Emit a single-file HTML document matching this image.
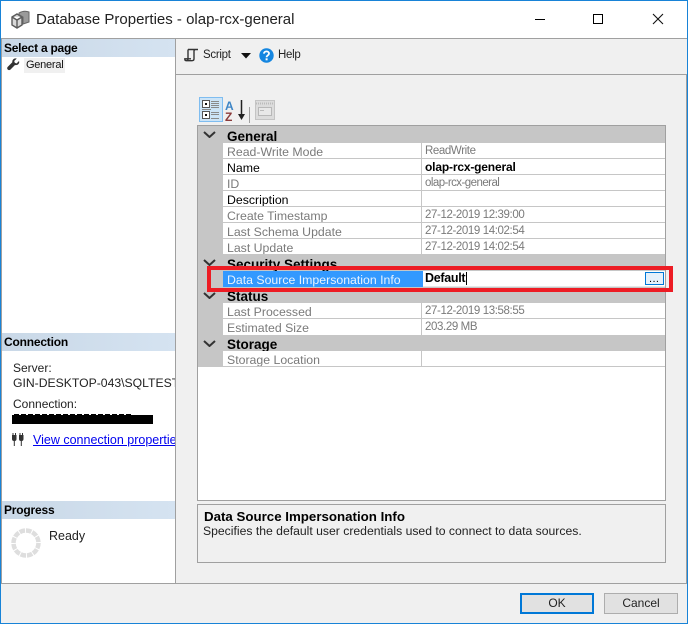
<!DOCTYPE html>
<html><head><meta charset="utf-8"><style>
html,body{margin:0;padding:0;width:688px;height:624px;overflow:hidden;background:#f0f0f0}
*{box-sizing:border-box}
body{position:relative;font-family:"Liberation Sans",sans-serif;color:#000}
.a{position:absolute}
.t{position:absolute;white-space:nowrap;line-height:15px}
.r{position:absolute;left:223px;width:442px;height:15px;background:#fff;overflow:hidden}
.l{position:absolute;left:4px;top:2px;font-size:12.3px;line-height:15px;white-space:nowrap;color:#7a7a7a}
.v{position:absolute;left:202px;top:1px;font-size:11.5px;letter-spacing:-.39px;line-height:15px;white-space:nowrap;color:#7a7a7a}
.s{position:absolute;left:198px;width:25px;height:16px;background:#c6c6c6}
.sep{position:absolute;left:198px;width:467px;height:1px;background:#c6c6c6}
.d{position:absolute;left:421px;width:1px;background:#c6c6c6}
.h{position:absolute;left:198px;width:467px;background:#c6c6c6;overflow:hidden}
.h b{position:absolute;left:29px;font-size:13.5px;line-height:15px;white-space:nowrap}
.h svg{position:absolute;left:5px}
.k{color:#000}
</style></head><body>
<!-- title bar -->
<div class="a" style="left:0;top:0;width:688px;height:38px;background:#fff"></div>
<svg class="a" style="left:10px;top:9px" width="20" height="20" viewBox="0 0 20 20"><path d="M2 8 L7 5 L12 8 L12 16 L7 19 L2 16 Z M2 8 L7 11 L12 8 M7 11 V19" fill="#d8d8d8" stroke="#5a5a5a" stroke-width="1.4"/><path d="M9 4 Q14 1 19 3 V13 L13 15 V8 L9 5.5 Z" fill="#9a9a9a" stroke="#666" stroke-width="1"/></svg>
<div class="t" style="left:36px;top:12px;font-size:15px;line-height:16px;color:#222">Database Properties - olap-rcx-general</div>
<div class="a" style="left:535px;top:19px;width:10px;height:1px;background:#000"></div>
<div class="a" style="left:593px;top:14px;width:10px;height:10px;border:1px solid #000"></div>
<svg class="a" style="left:652px;top:13px" width="12" height="12" viewBox="0 0 12 12"><path d="M1 1 L11 11 M11 1 L1 11" stroke="#111" stroke-width="1.1" fill="none"/></svg>
<div class="a" style="left:0;top:38px;width:688px;height:1px;background:#a0a0a0"></div>

<!-- left panel -->
<div class="a" style="left:1px;top:39px;width:174px;height:544px;background:#fff"></div>
<div class="a" style="left:175px;top:39px;width:1px;height:544px;background:#a0a0a0"></div>
<div class="a" style="left:1px;top:39px;width:1px;height:544px;background:#a0a0a0"></div>
<div class="a" style="left:2px;top:39px;width:173px;height:18px;background:linear-gradient(90deg,#c9d8e7,#d5e3f1)"></div>
<div class="t" style="left:4px;top:41px;font-size:12px;font-weight:bold;letter-spacing:-.25px">Select a page</div>
<div class="a" style="left:24px;top:58px;width:41px;height:15px;background:#f0f0f0"></div>
<svg class="a" style="left:7px;top:58px" width="13" height="13" viewBox="0 0 13 13"><path d="M12 3 L9.5 5.5 L7.8 4.8 L7.2 3 L9.7 .6 C7.5 -.2 5 1.5 5.3 4.3 L.6 9 C-.2 10 .2 11 .8 11.6 C1.5 12.3 2.6 12.4 3.4 11.6 L8 7 C10.7 7.6 12.9 5.5 12 3 Z" fill="#333"/></svg>
<div class="t" style="left:26px;top:58px;font-size:11px;letter-spacing:-.25px;color:#111">General</div>

<div class="a" style="left:2px;top:333px;width:173px;height:18px;background:linear-gradient(90deg,#c9d8e7,#d5e3f1)"></div>
<div class="t" style="left:4px;top:335px;font-size:12px;font-weight:bold;letter-spacing:-.2px">Connection</div>
<div class="t" style="left:13px;top:361px;font-size:12px;color:#222">Server:</div>
<div class="a" style="left:13px;top:376px;width:162px;height:16px;overflow:hidden"><div class="t" style="left:0;top:0;font-size:12.2px;color:#222">GIN-DESKTOP-043\SQLTEST</div></div>
<div class="t" style="left:13px;top:397px;font-size:12px;color:#222">Connection:</div>
<div class="a" style="left:14px;top:414px;width:118px;height:1px;background:repeating-linear-gradient(90deg,#000 0 5px,#fff 5px 7px)"></div>
<div class="a" style="left:12px;top:415px;width:141px;height:9px;background:#000"></div>
<svg class="a" style="left:11px;top:433px" width="14" height="14" viewBox="0 0 14 14"><path d="M1 2 H5.5 V6 C5.5 7.5 4.5 8 3.8 8 V13 H2.8 V8 C2 8 1 7.5 1 6 Z M8 2 H12.5 V6 C12.5 7.5 11.5 8 10.8 8 V13 H9.8 V8 C9 8 8 7.5 8 6 Z" fill="#333"/><path d="M2 0 V2 M4.5 0 V2 M9 0 V2 M11.5 0 V2" stroke="#333"/></svg>
<div class="a" style="left:33px;top:433px;width:142px;height:16px;overflow:hidden"><div class="t" style="left:0;top:0;font-size:12.5px;color:#0000ee;text-decoration:underline">View connection properties</div></div>

<div class="a" style="left:2px;top:501px;width:173px;height:18px;background:linear-gradient(90deg,#c9d8e7,#d5e3f1)"></div>
<div class="t" style="left:4px;top:503px;font-size:12px;font-weight:bold;letter-spacing:-.2px">Progress</div>
<svg class="a" style="left:11px;top:528px" width="30" height="30" viewBox="0 0 30 30"><circle cx="15" cy="15" r="12.5" fill="none" stroke="#dedede" stroke-width="4.5" stroke-dasharray="5.5 1"/></svg>
<div class="t" style="left:49px;top:529px;font-size:12.5px;color:#222">Ready</div>

<!-- toolbar -->
<svg class="a" style="left:184px;top:48px" width="15" height="14" viewBox="0 0 15 14"><path d="M4 1.5 H14 M4 1.5 V11 C4 12.3 3 12.7 2 12.7 H8 C9.2 12.7 10 12 10 10.8 V3 C10 2 10.5 1.5 11.5 1.5 M2 12.7 C1 12.7 .8 11.7 .8 10.8 H7" fill="none" stroke="#333" stroke-width="1.4"/></svg>
<div class="t" style="left:203px;top:48px;font-size:11.5px;letter-spacing:-.3px;color:#222">Script</div>
<svg class="a" style="left:241px;top:53px" width="10" height="6" viewBox="0 0 10 6"><path d="M0 0 H10 L5 5.5 Z" fill="#111"/></svg>
<svg class="a" style="left:259px;top:48px" width="15" height="15" viewBox="0 0 15 15"><circle cx="7.5" cy="7.5" r="7.2" fill="#1586e0"/><path d="M5 5.6 C5 2.6 10 2.6 10 5.6 C10 7.3 7.6 7.3 7.6 9.2" fill="none" stroke="#fff" stroke-width="1.8"/><rect x="6.6" y="10.3" width="2" height="2" fill="#fff"/></svg>
<div class="t" style="left:278px;top:48px;font-size:11.5px;letter-spacing:-.3px;color:#222">Help</div>
<div class="a" style="left:176px;top:74px;width:511px;height:1px;background:#a0a0a0"></div>
<div class="a" style="left:686px;top:74px;width:1px;height:510px;background:#a0a0a0"></div>

<!-- grid toolbar -->
<div class="a" style="left:199px;top:97px;width:24px;height:25px;background:#cce4f7;border:1px solid #7fbdf0"></div>
<svg class="a" style="left:201px;top:99px" width="21" height="22" viewBox="0 0 21 22"><rect x="1.500" y="1.500" width="7" height="7" fill="#fff" stroke="#555"/><rect x="4" y="4" width="2" height="2" fill="#111"/><rect x="1.500" y="12.500" width="7" height="7" fill="#fff" stroke="#555"/><rect x="4" y="15" width="2" height="2" fill="#111"/><path d="M10 2.500H18M10 4.500H18M10 6.500H18M10 8.500H18M10 13.500H18M10 15.500H18M1 10.500H10M10 19.500H18" stroke="#8a8a8a"/></svg>
<div class="t" style="left:225px;top:101px;font-size:12px;font-weight:bold;line-height:11px;color:#3d85c6">A</div>
<div class="t" style="left:225px;top:112px;font-size:12px;font-weight:bold;line-height:11px;color:#8a3a3a">Z</div>
<svg class="a" style="left:237px;top:100px" width="9" height="21" viewBox="0 0 9 21"><path d="M4.500 0 V14" stroke="#222" stroke-width="1.500"/><path d="M1 14 H8 L4.500 20 Z" fill="#222"/></svg>
<div class="a" style="left:249px;top:107px;width:1px;height:16px;background:#a0a0a0"></div>
<svg class="a" style="left:255px;top:100px" width="20" height="20" viewBox="0 0 20 20"><rect x=".5" y=".5" width="19" height="19" fill="#dcdcdc" stroke="#c4c4c4"/><path d="M1 3.500H19" stroke="#bbb" stroke-width="2" stroke-dasharray="1 1"/><rect x="3.500" y="7.500" width="13" height="8" fill="#e8e8e8" stroke="#b8b8b8"/><path d="M5 10.500H9" stroke="#bbb"/></svg>

<!-- grid -->
<div class="a" style="left:197px;top:125px;width:469px;height:376px;background:#fff;border:1px solid #a0a0a0"></div>

<div class="h" style="top:126px;height:17px"><svg style="top:5px" width="13" height="7" viewBox="0 0 13 7"><path d="M1 1 L6.500 6 L12 1" fill="none" stroke="#333" stroke-width="2"/></svg><b style="top:3px">General</b></div>
<div class="s" style="top:143px;height:111px"></div>
<div class="r" style="top:143px"><div class="l">Read-Write Mode</div><div class="v">ReadWrite</div></div>
<div class="r" style="top:159px"><div class="l k">Name</div><div class="v k" style="font-size:12px;font-weight:bold;letter-spacing:-.17px">olap-rcx-general</div></div>
<div class="r" style="top:175px"><div class="l">ID</div><div class="v" style="letter-spacing:-.55px">olap-rcx-general</div></div>
<div class="r" style="top:191px"><div class="l k">Description</div></div>
<div class="r" style="top:207px"><div class="l">Create Timestamp</div><div class="v">27-12-2019 12:39:00</div></div>
<div class="r" style="top:223px"><div class="l">Last Schema Update</div><div class="v">27-12-2019 14:02:54</div></div>
<div class="r" style="top:239px"><div class="l">Last Update</div><div class="v">27-12-2019 14:02:54</div></div>

<div class="h" style="top:254px;height:17px"><svg style="top:5px" width="13" height="7" viewBox="0 0 13 7"><path d="M1 1 L6.500 6 L12 1" fill="none" stroke="#333" stroke-width="2"/></svg><b style="top:3px">Security Settings</b></div>
<div class="s" style="top:271px;height:16px"></div>
<div class="a" style="left:223px;top:271px;width:198px;height:16px;background:#3399ff;overflow:hidden"><div class="l" style="color:#e8f3ff;top:2px">Data Source Impersonation Info</div></div>
<div class="a" style="left:421px;top:271px;width:2px;height:16px;background:#3399ff"></div>
<div class="a" style="left:423px;top:271px;width:242px;height:15px;background:#fff"></div>
<div class="a" style="left:423px;top:286px;width:242px;height:1px;background:#e6e6e6"></div>
<div class="t" style="left:425px;top:271px;font-size:12.5px;font-weight:bold;letter-spacing:-.3px">Default</div>
<div class="a" style="left:466px;top:272px;width:1px;height:13px;background:#000"></div>
<div class="a" style="left:645px;top:272px;width:19px;height:13px;background:#e5f1fb;border:1px solid #0078d7"></div>
<div class="t" style="left:649px;top:273px;font-size:11px;line-height:12px;letter-spacing:.4px">...</div>

<div class="h" style="top:287px;height:16px"><svg style="top:5px" width="13" height="7" viewBox="0 0 13 7"><path d="M1 1 L6.500 6 L12 1" fill="none" stroke="#333" stroke-width="2"/></svg><b style="top:2px">Status</b></div>
<div class="s" style="top:303px;height:32px"></div>
<div class="r" style="top:303px"><div class="l">Last Processed</div><div class="v">27-12-2019 13:58:55</div></div>
<div class="r" style="top:319px"><div class="l">Estimated Size</div><div class="v">203.29 MB</div></div>

<div class="h" style="top:335px;height:16px"><svg style="top:5px" width="13" height="7" viewBox="0 0 13 7"><path d="M1 1 L6.500 6 L12 1" fill="none" stroke="#333" stroke-width="2"/></svg><b style="top:2px">Storage</b></div>
<div class="s" style="top:351px;height:15px"></div>
<div class="r" style="top:351px"><div class="l">Storage Location</div></div>

<div class="sep" style="top:158px;left:223px;width:442px"></div>
<div class="sep" style="top:174px;left:223px;width:442px"></div>
<div class="sep" style="top:190px;left:223px;width:442px"></div>
<div class="sep" style="top:206px;left:223px;width:442px"></div>
<div class="sep" style="top:222px;left:223px;width:442px"></div>
<div class="sep" style="top:238px;left:223px;width:442px"></div>
<div class="sep" style="top:318px;left:223px;width:442px"></div>
<div class="sep" style="top:366px"></div>
<div class="d" style="top:143px;height:111px"></div>
<div class="d" style="top:303px;height:32px"></div>
<div class="d" style="top:351px;height:15px"></div>

<!-- red highlight -->
<div class="a" style="left:207px;top:266px;width:466px;height:26px;border:4px solid #ed1c24"></div>

<!-- description -->
<div class="a" style="left:197px;top:504px;width:469px;height:59px;border:1px solid #a0a0a0"></div>
<div class="t" style="left:204px;top:509px;font-size:13.3px;font-weight:bold">Data Source Impersonation Info</div>
<div class="t" style="left:203px;top:524px;font-size:12.2px;color:#222">Specifies the default user credentials used to connect to data sources.</div>

<!-- footer -->
<div class="a" style="left:1px;top:583px;width:686px;height:1px;background:#a0a0a0"></div>
<div class="a" style="left:520px;top:593px;width:74px;height:21px;background:#e1e1e1;border:2px solid #0078d7"></div>
<div class="t" style="left:520px;top:596px;width:74px;text-align:center;font-size:12px;color:#222">OK</div>
<div class="a" style="left:604px;top:593px;width:74px;height:21px;background:#e1e1e1;border:1px solid #adadad"></div>
<div class="t" style="left:604px;top:596px;width:74px;text-align:center;font-size:12px;color:#222">Cancel</div>

<!-- window border -->
<div class="a" style="left:0;top:0;width:688px;height:1px;background:#1883d7"></div>
<div class="a" style="left:0;top:623px;width:688px;height:1px;background:#1883d7"></div>
<div class="a" style="left:0;top:0;width:1px;height:624px;background:#1883d7"></div>
<div class="a" style="left:687px;top:0;width:1px;height:624px;background:#1883d7"></div>
</body></html>
